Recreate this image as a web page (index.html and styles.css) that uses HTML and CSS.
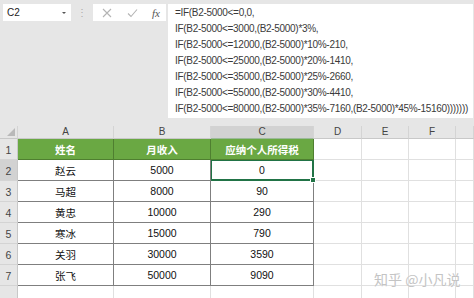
FILE: index.html
```html
<!DOCTYPE html>
<html>
<head>
<meta charset="utf-8">
<link rel="stylesheet" href="styles.css">
</head>
<body>
<div class="topbar">
  <div class="namebox"><span>C2</span><span class="caret"></span></div>
  <div class="sep">⋮</div>
  <div class="btns">
    <svg class="ico" width="10" height="10" viewBox="0 0 10 10"><path d="M1 1L9 9M9 1L1 9" stroke="#b4b4b4" stroke-width="1.1" fill="none"/></svg>
    <svg class="ico" width="11" height="10" viewBox="0 0 11 10"><path d="M1 5.5L4 8.5L10 1.5" stroke="#b4b4b4" stroke-width="1.1" fill="none"/></svg>
    <span class="fx">fx</span>
  </div>
  <div class="formula">
    <div>=IF(B2-5000&lt;=0,0,</div>
    <div>IF(B2-5000&lt;=3000,(B2-5000)*3%,</div>
    <div>IF(B2-5000&lt;=12000,(B2-5000)*10%-210,</div>
    <div>IF(B2-5000&lt;=25000,(B2-5000)*20%-1410,</div>
    <div>IF(B2-5000&lt;=35000,(B2-5000)*25%-2660,</div>
    <div>IF(B2-5000&lt;=55000,(B2-5000)*30%-4410,</div>
    <div>IF(B2-5000&lt;=80000,(B2-5000)*35%-7160,(B2-5000)*45%-15160)))))))</div>
  </div>
</div>
<div class="sheet">
  <div class="grid">
    <div class="corner"><span class="tri"></span></div>
    <div class="ch">A</div><div class="ch">B</div><div class="ch sel">C</div><div class="ch">D</div><div class="ch">E</div><div class="ch">F</div><div class="ch"></div>

    <div class="rh">1</div>
    <div class="c hd">姓名</div><div class="c hd">月收入</div><div class="c hd">应纳个人所得税</div><div class="e"></div><div class="e"></div><div class="e"></div><div class="e"></div>

    <div class="rh sel">2</div>
    <div class="c">赵云</div><div class="c">5000</div><div class="c cur">0<span class="handle"></span></div><div class="e"></div><div class="e"></div><div class="e"></div><div class="e"></div>

    <div class="rh">3</div>
    <div class="c">马超</div><div class="c">8000</div><div class="c">90</div><div class="e"></div><div class="e"></div><div class="e"></div><div class="e"></div>

    <div class="rh">4</div>
    <div class="c">黄忠</div><div class="c">10000</div><div class="c">290</div><div class="e"></div><div class="e"></div><div class="e"></div><div class="e"></div>

    <div class="rh">5</div>
    <div class="c">寒冰</div><div class="c">15000</div><div class="c">790</div><div class="e"></div><div class="e"></div><div class="e"></div><div class="e"></div>

    <div class="rh">6</div>
    <div class="c">关羽</div><div class="c">30000</div><div class="c">3590</div><div class="e"></div><div class="e"></div><div class="e"></div><div class="e"></div>

    <div class="rh">7</div>
    <div class="c">张飞</div><div class="c">50000</div><div class="c">9090</div><div class="e"></div><div class="e"></div><div class="e"></div><div class="e"></div>

    <div class="rh"></div>
    <div class="e"></div><div class="e"></div><div class="e"></div><div class="e"></div><div class="e"></div><div class="e"></div><div class="e"></div>
  </div>
  <div class="watermark">知乎 @小凡说</div>
</div>
</body>
</html>
```
FILE: styles.css
```css
* { box-sizing: border-box; }
html, body { margin: 0; padding: 0; }
body {
  width: 474px;
  height: 298px;
  overflow: hidden;
  background: #fff;
  font-family: "Liberation Sans", "Noto Sans CJK SC", sans-serif;
}
.topbar {
  height: 126px;
  background: #e6e6e6;
  display: flex;
  align-items: flex-start;
  padding: 4px 1px 0 3px;
}
.namebox {
  width: 68px;
  height: 17px;
  background: #fff;
  display: flex;
  align-items: center;
  justify-content: space-between;
  padding: 0 5px 0 4px;
  font-size: 10px;
  color: #222;
}
.caret {
  width: 0; height: 0;
  border-left: 2px solid transparent;
  border-right: 2px solid transparent;
  border-top: 2px solid #555;
}
.sep {
  width: 22px;
  text-align: center;
  color: #aaa;
  font-size: 10px;
  line-height: 17px;
}
.btns {
  width: 73px;
  height: 17px;
  background: #fff;
  display: flex;
  align-items: center;
  justify-content: space-between;
  padding: 0 6px 0 9px;
}
.fx {
  font-family: "Liberation Serif", serif;
  font-style: italic;
  font-size: 11px;
  color: #555;
}
.formula {
  margin-left: 2px;
  flex: 1;
  height: 114px;
  background: #fff;
  padding: 1px 0 0 7px;
  font-size: 10px;
  letter-spacing: -0.3px;
  line-height: 16px;
  color: #3a3a3a;
  white-space: nowrap;
  overflow: hidden;
}
.sheet { position: relative; }
.grid {
  display: grid;
  grid-template-columns: 18px 96px 97px 103px 48px 47px 47px 18px;
  grid-template-rows: 13px repeat(8, 21px);
}
.corner {
  background: #e6e6e6;
  border-right: 1px solid #d4d4d4;
  border-bottom: 1px solid #c8c8c8;
  position: relative;
}
.tri {
  position: absolute;
  right: 2px; bottom: 2px;
  width: 0; height: 0;
  border-left: 8px solid transparent;
  border-bottom: 8px solid #b9b9b9;
}
.ch {
  background: #e6e6e6;
  border-right: 1px solid #d4d4d4;
  border-bottom: 1px solid #c8c8c8;
  font-size: 10px;
  color: #444;
  text-align: center;
  line-height: 12px;
}
.ch.sel { background: #d2d2d2; border-bottom: 1px solid #9cb99a; }
.rh {
  background: #e6e6e6;
  border-right: 1px solid #c8c8c8;
  border-bottom: 1px solid #d4d4d4;
  font-size: 10.5px;
  color: #444;
  display: flex;
  align-items: center;
  justify-content: center;
  padding-top: 1px;
}
.rh.sel { background: #d2d2d2; }
.c {
  border-right: 1px solid #7f7f7f;
  border-bottom: 1px solid #7f7f7f;
  font-size: 10.5px;
  color: #111;
  display: flex;
  align-items: center;
  justify-content: center;
  position: relative;
}
.c.hd {
  background: #6aa843;
  color: #fff;
  font-weight: bold;
  border-right-color: #4f7f30;
  border-bottom-color: #4f7f30;
}
.c.cur {
  box-shadow: inset 0 0 0 1px #217346;
  border-right: 1px solid #217346;
  border-bottom: 1px solid #217346;
}
.handle {
  position: absolute;
  right: -3px; bottom: -3px;
  width: 4px; height: 4px;
  background: #217346;
  border: 1px solid #fff;
  box-sizing: content-box;
  z-index: 2;
}
.e {
  border-right: 1px solid #e0e0e0;
  border-bottom: 1px solid #e0e0e0;
}
.watermark {
  position: absolute;
  left: 374px;
  top: 145px;
  font-family: "Noto Sans CJK SC", sans-serif;
  font-size: 14px;
  line-height: 16px;
  color: #c4c4c4;
  text-shadow: 0 0 1px #fff;
}
```
